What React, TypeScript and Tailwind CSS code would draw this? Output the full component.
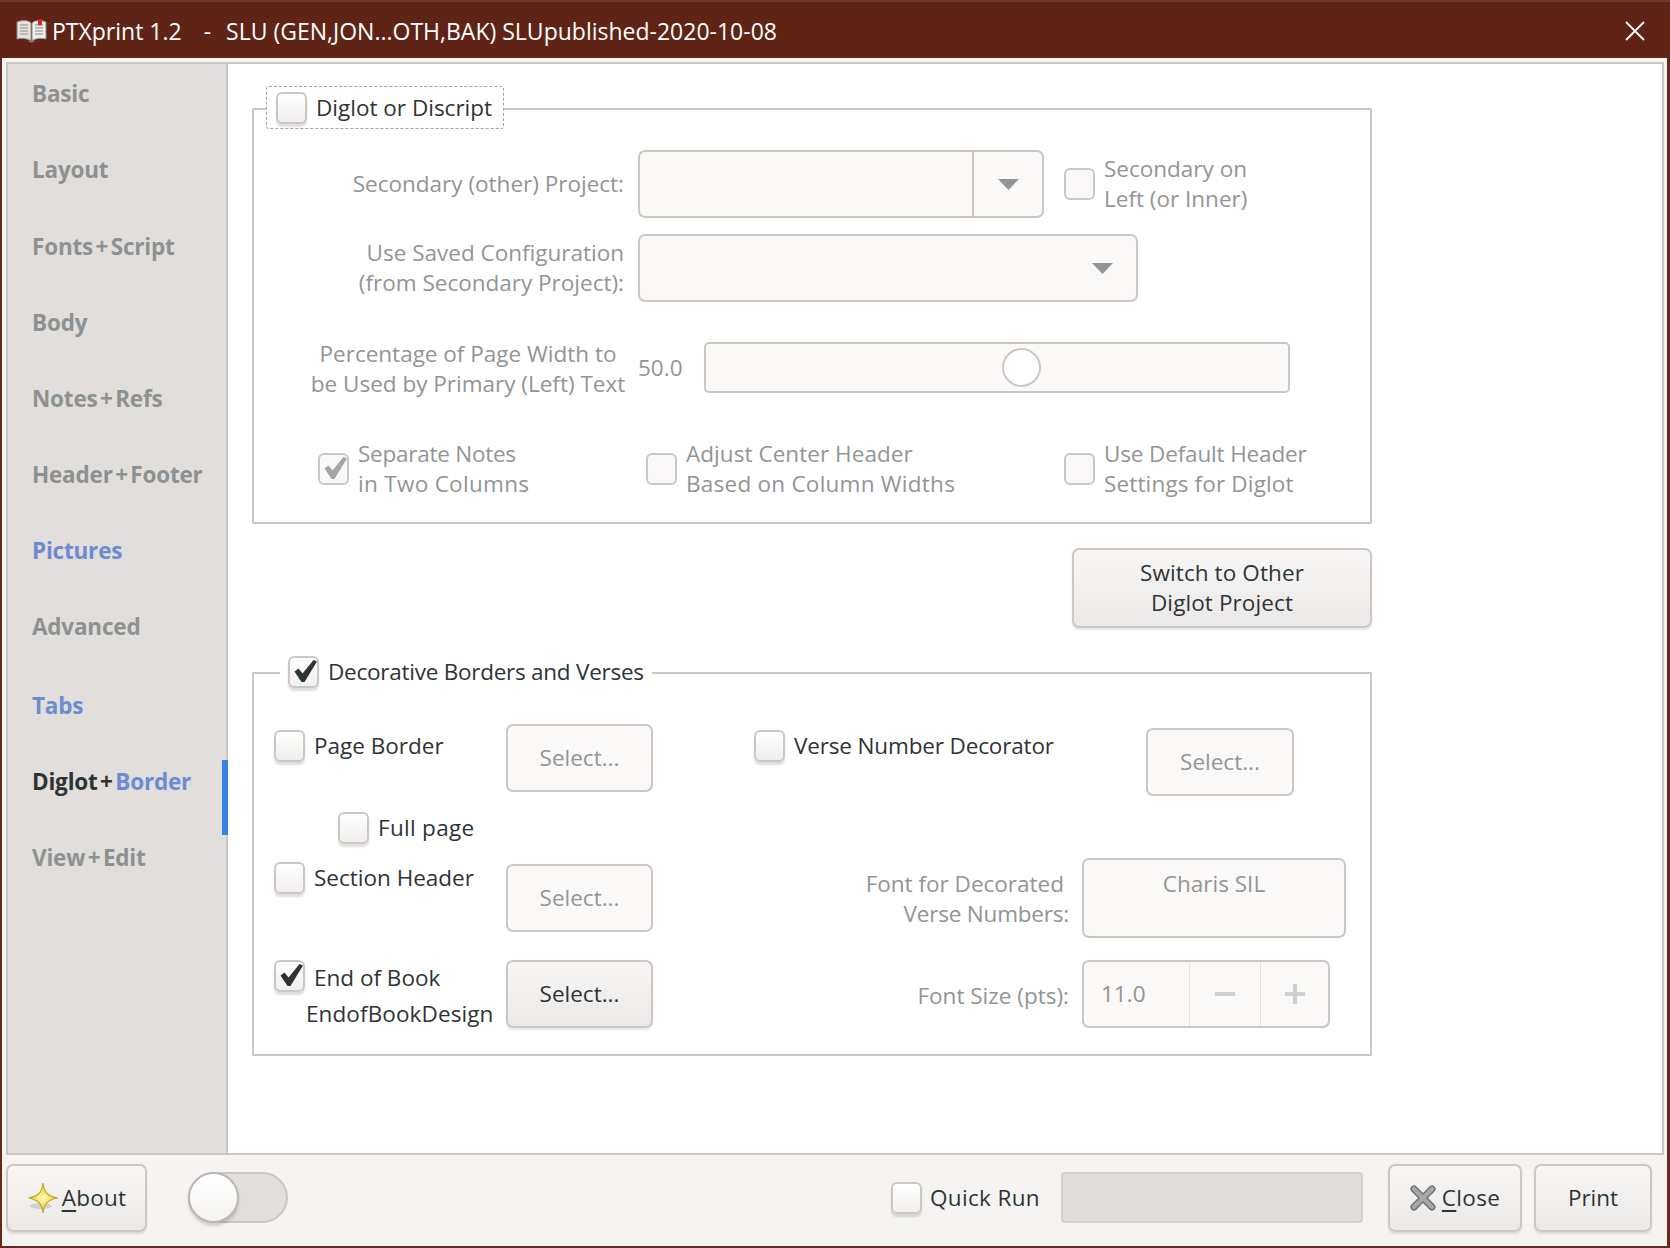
import React from "react";

const Check = ({ dim }: { dim?: boolean }) => (
  <svg viewBox="0 0 31 32" className="absolute left-[-2px] top-[-2px] w-[31px] h-[32px] overflow-visible blur-[0.4px]">
    <path
      d="M6.5 15.5 L10.5 12.5 L14.5 17.5 L25.5 4 L29 5.5 L16.5 26 L13.5 26 Z"
      fill={dim ? "#a5a7a7" : "#2e3436"}
    />
  </svg>
);

const Cb = ({ checked, disabled, dim }: { checked?: boolean; disabled?: boolean; dim?: boolean }) =>
  disabled ? (
    <div className="relative shrink-0 w-[31px] h-[32px] rounded-[6px] border-2 border-[#cdc7c2] bg-[#faf9f8]">
      {checked && <Check dim={dim} />}
    </div>
  ) : (
    <div className="relative shrink-0 w-[31px] h-[32px] rounded-[6px] border-2 border-[#cdc7c2] bg-gradient-to-b from-white to-[#f1efed] shadow-[0_3px_2px_rgba(0,0,0,0.13)]">
      {checked && <Check />}
    </div>
  );

const Btn = ({
  children,
  disabled,
  className = "",
}: {
  children: React.ReactNode;
  disabled?: boolean;
  className?: string;
}) => (
  <div
    className={
      "flex items-center justify-center text-center shrink-0 rounded-[7px] border-2 border-[#cdc7c2] " +
      (disabled
        ? "bg-[#faf9f8] text-[#929595] "
        : "bg-gradient-to-b from-[#f8f7f6] to-[#ebe9e7] text-[#2e3436] shadow-[0_2px_2px_rgba(0,0,0,0.1)] ") +
      className
    }
  >
    {children}
  </div>
);

const Arrow = () => (
  <svg width="21" height="11" viewBox="0 0 21 11" className="shrink-0">
    <polygon points="0,0 21,0 10.5,11" fill="#929595" />
  </svg>
);

const Tab = ({
  children,
  active,
  className = "",
}: {
  children: React.ReactNode;
  active?: boolean;
  className?: string;
}) => (
  <div className={"relative h-[76.07px] pl-[24px] pt-[7px] font-bold text-[#8e9192] text-[22.5px] tracking-[-0.2px] " + className}>
    {children}
    {active && <div className="absolute right-[-2px] top-0 w-[6px] h-[75px] bg-[#3584e4]" />}
  </div>
);

const Plus = () => <span className="px-[2.5px]">+</span>;

const Star = () => (
  <svg width="32" height="32" viewBox="0 0 32 32" className="shrink-0">
    <defs>
      <radialGradient id="st" cx="50%" cy="50%" r="50%">
        <stop offset="0%" stopColor="#fffbc0" />
        <stop offset="60%" stopColor="#f2de55" />
        <stop offset="100%" stopColor="#d8b920" />
      </radialGradient>
    </defs>
    <ellipse cx="14" cy="24" rx="11" ry="3" fill="#000" opacity="0.12" />
    <path
      d="M16 1 C17 10 20 14 30.5 16 C20 18 17 22 16 31 C15 22 12 18 1.5 16 C12 14 15 10 16 1 Z"
      fill="url(#st)"
      stroke="#c6a51b"
      strokeWidth="1.2"
    />
  </svg>
);

const BookIcon = () => (
  <svg width="31" height="24" viewBox="0 0 31 24" className="shrink-0">
    <path d="M1 3 C6 1 12 1 15 4 L15 22 C11 19 6 19 1 20 Z" fill="#e6e3df" stroke="#8f8a86" strokeWidth="1" />
    <path d="M30 3 C25 1 19 1 16 4 L16 22 C20 19 25 19 30 20 Z" fill="#efedea" stroke="#8f8a86" strokeWidth="1" />
    <path
      d="M4 6 H12 M4 9 H12 M4 12 H12 M4 15 H12 M19 6 H27 M19 9 H27 M19 12 H27 M19 15 H27"
      stroke="#8c8c8c"
      strokeWidth="1"
    />
    <rect x="22" y="0" width="4" height="6" fill="#e0202a" />
    <path d="M11 22 H20 L15.5 24 Z" fill="#77716c" />
  </svg>
);

const TabsList = () => (
  <div className="w-[220px] h-full shrink-0 bg-[#e1dedb] border-r-2 border-[#cdc7c2] pt-[8.4px]">
    <Tab>Basic</Tab>
    <Tab>Layout</Tab>
    <Tab>
      Fonts
      <Plus />
      Script
    </Tab>
    <Tab>Body</Tab>
    <Tab>
      Notes
      <Plus />
      Refs
    </Tab>
    <Tab>
      Header
      <Plus />
      Footer
    </Tab>
    <Tab>
      <span className="text-[#6c8bd2]">Pictures</span>
    </Tab>
    <Tab>Advanced</Tab>
    <Tab className="mt-[3px]">
      <span className="text-[#6c8bd2]">Tabs</span>
    </Tab>
    <Tab active>
      <span className="text-[#2e3436]">
        Diglot
        <Plus />
      </span>
      <span className="text-[#6c8bd2]">Border</span>
    </Tab>
    <Tab>
      View
      <Plus />
      Edit
    </Tab>
  </div>
);

const Muted = ({ children, className = "" }: { children: React.ReactNode; className?: string }) => (
  <div className={"text-[#929595] " + className}>{children}</div>
);

const Diglot = () => (
  <div className="relative ml-[24px] mt-[44px] w-[1120px] h-[416px] shrink-0 border-2 border-[#cdc7c2]">
    <div className="absolute left-[12px] top-[-24px] w-[238px] h-[43px] flex items-center pl-[9px] gap-[9px] bg-white border border-dashed border-[#aaa5a0] rounded-[3px] text-[#2e3436]">
      <Cb />
      <span>Diglot or Discript</span>
    </div>

    <div className="flex items-center h-[68px] mt-[40px]">
      <Muted className="w-[370px] text-right">Secondary (other) Project:</Muted>
      <div className="ml-[14px] w-[406px] h-[68px] flex rounded-[7px] border-2 border-[#cdc7c2] bg-[#faf9f8]">
        <div className="w-[334px] border-r-2 border-[#cdc7c2]" />
        <div className="flex-1 flex items-center justify-center">
          <Arrow />
        </div>
      </div>
      <div className="ml-[20px]">
        <Cb disabled />
      </div>
      <Muted className="ml-[9px]">
        Secondary on
        <br />
        Left (or Inner)
      </Muted>
    </div>

    <div className="flex items-center h-[68px] mt-[16px]">
      <Muted className="w-[370px] text-right">
        Use Saved Configuration
        <br />
        (from Secondary Project):
      </Muted>
      <div className="ml-[14px] w-[500px] h-[68px] flex items-center justify-end pr-[23px] rounded-[7px] border-2 border-[#cdc7c2] bg-[#faf9f8]">
        <Arrow />
      </div>
    </div>

    <div className="flex items-center h-[51px] mt-[40px]">
      <Muted className="w-[372px] text-center pl-[56px] pt-[2px]">
        Percentage of Page Width to
        <br />
        be Used by Primary (Left) Text
      </Muted>
      <Muted className="ml-[12px] w-[66px]">50.0</Muted>
      <div className="relative w-[586px] h-[51px] rounded-[5px] border-2 border-[#cdc7c2] bg-[#faf9f8]">
        <div className="absolute left-[296px] top-[4px] w-[39px] h-[39px] rounded-full border-2 border-[#cdc7c2] bg-white" />
      </div>
    </div>

    <div className="flex items-center mt-[46px] h-[59px] pl-[64px]">
      <Cb disabled checked dim />
      <Muted className="ml-[9px] w-[288px]">
        <span className="tracking-[-0.25px]">Separate Notes</span>
        <br />
        <span className="tracking-[0.3px]">in Two Columns</span>
      </Muted>
      <Cb disabled />
      <Muted className="ml-[9px] w-[378px]">
        <span className="tracking-[0.05px]">Adjust Center Header</span>
        <br />
        <span className="tracking-[0.25px]">Based on Column Widths</span>
      </Muted>
      <Cb disabled />
      <Muted className="ml-[9px]">
        <span className="tracking-[-0.15px]">Use Default Header</span>
        <br />
        <span className="tracking-[0.15px]">Settings for Diglot</span>
      </Muted>
    </div>
  </div>
);

const CheckRow = ({
  label,
  checked,
  textClass = "",
}: {
  label: string;
  checked?: boolean;
  textClass?: string;
}) => (
  <div className="flex items-center h-[32px] gap-[9px] text-[#2e3436] whitespace-nowrap">
    <Cb checked={checked} />
    <span className={textClass}>{label}</span>
  </div>
);

const Borders = () => (
  <div className="relative ml-[24px] mt-[44px] w-[1120px] h-[384px] shrink-0 border-2 border-[#cdc7c2] flex">
    <div className="absolute left-[26px] top-[-17px] w-[372px] h-[30px] flex items-center pl-[8px] gap-[9px] bg-white text-[#2e3436]">
      <Cb checked />
      <span className="tracking-[-0.25px]">Decorative Borders and Verses</span>
    </div>

    <div className="w-[500px] shrink-0 pt-[50px]">
      <div className="flex items-start h-[68px]">
        <div className="w-[252px] pl-[20px] pt-[6px]">
          <CheckRow label="Page Border" />
        </div>
        <Btn disabled className="w-[147px] h-[68px]">
          Select...
        </Btn>
      </div>
      <div className="mt-[20px] pl-[84px]">
        <CheckRow label="Full page" textClass="tracking-[0.3px]" />
      </div>
      <div className="flex items-start h-[70px] mt-[18px]">
        <div className="w-[252px] pl-[20px]">
          <CheckRow label="Section Header" />
        </div>
        <Btn disabled className="w-[147px] h-[68px] mt-[2px]">
          Select...
        </Btn>
      </div>
      <div className="flex items-start h-[68px] mt-[28px]">
        <div className="w-[252px] pl-[20px]">
          <CheckRow label="End of Book" checked textClass="mt-[4px]" />
          <div className="mt-[7px] ml-[32px] text-[#2e3436] tracking-[0.1px]">EndofBookDesign</div>
        </div>
        <Btn className="w-[147px] h-[68px]">Select...</Btn>
      </div>
    </div>

    <div className="flex-1 pt-[54px]">
      <div className="flex items-start h-[68px]">
        <div className="w-[392px] pt-[2px]">
          <CheckRow label="Verse Number Decorator" textClass="tracking-[-0.15px]" />
        </div>
        <Btn disabled className="w-[148px] h-[68px]">
          Select...
        </Btn>
      </div>
      <div className="flex items-start h-[80px] mt-[62px]">
        <Muted className="w-[315px] text-right pt-[11px]">
          <span className="pr-[5px]">Font for Decorated</span>
          <br />
          <span className="tracking-[-0.2px]">Verse Numbers:</span>
        </Muted>
        <div className="ml-[13px] w-[264px] h-[80px] rounded-[7px] border-2 border-[#cdc7c2] bg-[#faf9f8] text-[#929595] text-center pt-[9px]">
          Charis SIL
        </div>
      </div>
      <div className="flex items-center h-[68px] mt-[22px]">
        <Muted className="w-[315px] text-right pt-[3px]">Font Size (pts):</Muted>
        <div className="ml-[13px] w-[248px] h-[68px] flex rounded-[7px] border-2 border-[#cdc7c2] bg-[#faf9f8] text-[#929595]">
          <div className="w-[105px] pl-[17px] flex items-center">11.0</div>
          <div className="w-[71px] border-l border-[#e4e1de] flex items-center justify-center">
            <div className="w-[20px] h-[4px] bg-[#cfd0d0]" />
          </div>
          <div className="flex-1 border-l border-[#e4e1de] flex items-center justify-center">
            <svg width="20" height="20" viewBox="0 0 20 20">
              <path d="M10 0 V20 M0 10 H20" stroke="#cfd0d0" strokeWidth="4" />
            </svg>
          </div>
        </div>
      </div>
    </div>
  </div>
);

const Footer = () => (
  <div className="flex items-center h-[91px] pl-[4px] pr-[15px] bg-[#f5f4f2] shrink-0 pb-[6px]">
    <Btn className="w-[141px] h-[68px] gap-[3px] text-[#2e3436]">
      <Star />
      <span className="tracking-[0.25px]">
        <span className="underline decoration-2 underline-offset-[4px]">A</span>bout
      </span>
    </Btn>
    <div className="relative ml-[41px] w-[100px] h-[51px] rounded-full border-2 border-[#cdc7c2] bg-[#e1dedb]">
      <div className="absolute left-[-2px] top-[-2px] w-[51px] h-[51px] rounded-full border-2 border-[#bdb6b0] bg-gradient-to-b from-white to-[#f4f3f1] shadow-[0_3px_3px_rgba(0,0,0,0.15)]" />
    </div>
    <div className="ml-auto flex items-center">
      <Cb />
      <span className="ml-[8px] text-[#2e3436] tracking-[0.35px]">Quick Run</span>
      <div className="ml-[21px] w-[302px] h-[51px] rounded-[4px] border-2 border-[#d5d1cd] bg-[#dfdcd9]" />
      <Btn className="ml-[25px] w-[134px] h-[68px] gap-[6px]">
        <svg width="26" height="26" viewBox="0 0 26 26" className="shrink-0">
          <path d="M4 4 L22 22 M22 4 L4 22" stroke="#6a6c6c" strokeWidth="7" strokeLinecap="round" />
          <path d="M4 4 L22 22 M22 4 L4 22" stroke="#a6a8a8" strokeWidth="4.5" strokeLinecap="round" />
        </svg>
        <span className="tracking-[0.3px]">
          <span className="underline decoration-2 underline-offset-[4px]">C</span>lose
        </span>
      </Btn>
      <Btn className="ml-[12px] w-[118px] h-[68px]">Print</Btn>
    </div>
  </div>
);

export default function App() {
  return (
    <div className="w-[1670px] h-[1248px] flex flex-col overflow-hidden bg-[#652a1a] font-['Open_Sans',sans-serif] text-[22.5px] leading-[30px]">
      <div className="h-[58px] shrink-0 flex items-center bg-[#5f2415] border-t-2 border-[#6d392b] pl-[16px] pt-[1px] text-white text-[23px]">
        <BookIcon />
        <span className="ml-[5px] whitespace-nowrap">PTXprint 1.2</span>
        <span className="ml-[22px]">-</span>
        <span className="ml-[15px] whitespace-nowrap">SLU (GEN,JON...OTH,BAK) SLUpublished-2020-10-08</span>
        <svg width="22" height="22" viewBox="0 0 22 22" className="ml-auto mr-[24px]">
          <path d="M2 2 L20 20 M20 2 L2 20" stroke="#fff" strokeWidth="1.8" />
        </svg>
      </div>
      <div className="ml-[2px] mr-[3px] mb-[2px] flex-1 flex flex-col bg-[#f8f7f6] min-h-0">
        <div className="mt-[4px] ml-[4px] mr-[3px] h-[1093px] shrink-0 border-2 border-[#cdc7c2] flex bg-white">
          <TabsList />
          <div className="flex-1 flex flex-col">
            <Diglot />
            <div className="ml-[844px] mt-[24px] w-[300px] shrink-0">
              <Btn className="w-[300px] h-[80px]">
                <span>
                  <span className="tracking-[0.1px]">Switch to Other</span>
                  <br />
                  <span className="tracking-[0.1px]">Diglot Project</span>
                </span>
              </Btn>
            </div>
            <Borders />
          </div>
        </div>
        <Footer />
      </div>
    </div>
  );
}
